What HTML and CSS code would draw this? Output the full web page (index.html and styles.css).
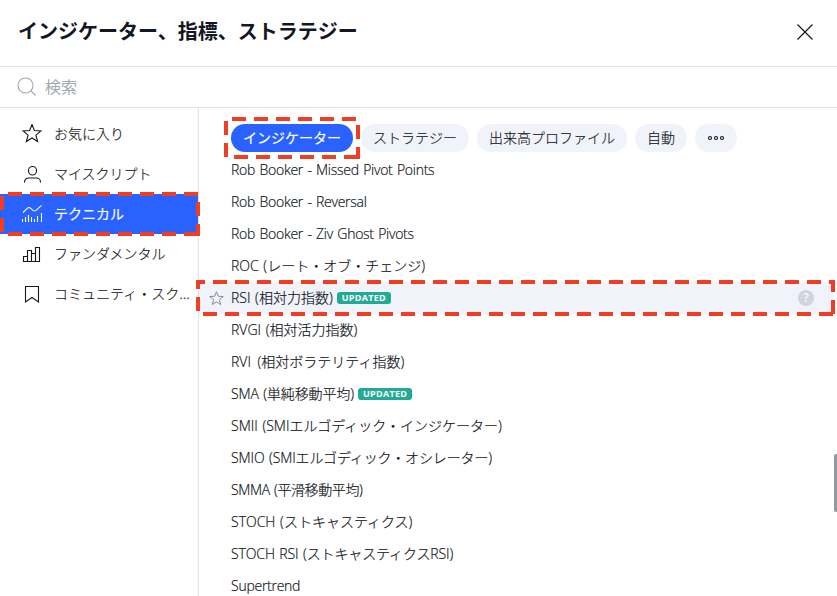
FILE: index.html
```html
<!DOCTYPE html>
<html lang="ja">

<head>
    <meta charset="utf-8">
    <title>インジケーター、指標、ストラテジー</title>
    <meta content="width=device-width,initial-scale=1" name="viewport">
    <link rel="stylesheet" href="styles.css">
</head>

<body>
    <div class="dialog">
        <header class="header">
            <h1>インジケーター、指標、ストラテジー</h1>
            <svg class="close" width="18" height="18" viewBox="0 0 18 18"><path d="M1.500 1.500l15 15m0-15l-15 15"/></svg>
        </header>
        <div class="search">
            <svg class="icon" width="20" height="20" viewBox="0 0 20 20"><circle cx="8.500" cy="8.500" r="7.500"/><path d="M14 14l4.500 4.500"/></svg>
            <span>検索</span>
        </div>
        <div class="main">
            <nav class="sidebar">
                <div class="tab">
                    <svg class="icon" width="20" height="20" viewBox="0 0 20 20"><path d="M10 .5l2.400 6 6.600.4-5.100 4.200 1.700 6.400-5.600-3.500-5.600 3.500 1.700-6.400L1 6.900l6.600-.4z"/></svg>
                    <span>お気に入り</span>
                </div>
                <div class="tab">
                    <svg class="icon" width="20" height="20" viewBox="0 0 20 20"><rect x="6.500" y="2.500" width="8" height="8.500" rx="4"/><path d="M2.500 18.500v-.5a4 4 0 0 1 4-4h8a4 4 0 0 1 4 4v.5"/></svg>
                    <span>マイスクリプト</span>
                </div>
                <div class="tab active">
                    <svg class="icon" width="20" height="20" viewBox="0 0 20 20"><path d="M1 8.500l4.500-4.300q1.500-1.300 3 0l2.500 2.200q1.500 1.200 3 0l5.500-5M.5 18v-3m3 3v-5m3 5v-7m3 7v-5m3 5v-3m3 3v-6m4 6V9"/></svg>
                    <span>テクニカル</span>
                </div>
                <div class="tab">
                    <svg class="icon" width="20" height="20" viewBox="0 0 20 20"><path d="M1.500 17.500v-5h4v5zM5.500 17.500v-11h4v11zM9.500 17.500v-8h4v8zM13.500 17.500v-14h4v14z"/></svg>
                    <span>ファンダメンタル</span>
                </div>
                <div class="tab">
                    <svg class="icon" width="20" height="20" viewBox="0 0 20 20"><path d="M3.500 2.500h13v15.500l-6.500-4.500-6.500 4.500z"/></svg>
                    <span>コミュニティ・スク...</span>
                </div>
            </nav>
            <div class="content">
                <div class="chips">
                    <div class="chip selected">インジケーター</div>
                    <div class="chip">ストラテジー</div>
                    <div class="chip">出来高プロファイル</div>
                    <div class="chip">自動</div>
                    <div class="chip more"><svg class="icon" width="18" height="6" viewBox="0 0 18 6"><circle cx="3" cy="3" r="1.500"/><circle cx="9" cy="3" r="1.500"/><circle cx="15" cy="3" r="1.500"/></svg></div>
                </div>
                <div class="list">
                    <div class="row"><span class="name latin">Rob Booker - Missed Pivot Points</span></div>
                    <div class="row"><span class="name latin">Rob Booker - Reversal</span></div>
                    <div class="row"><span class="name latin">Rob Booker - Ziv Ghost Pivots</span></div>
                    <div class="row"><span class="name">ROC (レート・オブ・チェンジ)</span></div>
                    <div class="row hovered">
                        <svg class="star" width="15" height="15" viewBox="0 0 20 20"><path d="M10 1l2.400 6 6.600.4-5.100 4.200 1.700 6.400-5.600-3.500L4.400 18l1.700-6.400L1 7.400 7.600 7z"/></svg>
                        <span class="name">RSI (相対力指数)</span><span class="badge">UPDATED</span>
                        <span class="help">?</span>
                    </div>
                    <div class="row"><span class="name">RVGI (相対活力指数)</span></div>
                    <div class="row"><span class="name loose">RVI (相対ボラテリティ指数)</span></div>
                    <div class="row"><span class="name tight">SMA (単純移動平均)</span><span class="badge">UPDATED</span></div>
                    <div class="row"><span class="name">SMII (SMIエルゴディック・インジケーター)</span></div>
                    <div class="row"><span class="name tight">SMIO (SMIエルゴディック・オシレーター)</span></div>
                    <div class="row"><span class="name tighter">SMMA (平滑移動平均)</span></div>
                    <div class="row"><span class="name">STOCH (ストキャスティクス)</span></div>
                    <div class="row"><span class="name tight">STOCH RSI (ストキャスティクスRSI)</span></div>
                    <div class="row"><span class="name latin">Supertrend</span></div>
                </div>
                <div class="scrollbar"></div>
            </div>
        </div>
    </div>

    <!-- dashed highlight frames -->
    <svg class="marks" width="837" height="596" viewBox="0 0 837 596">
        <path d="M8 194H200M8 234H198M2 196V236M198 202V236"/>
        <path d="M232 119H360M234 157H360M226 121V159M358 125V159"/>
        <path d="M213 282H835M203 314H835M198 297V311M196 282H205M198 280V289M833 280V292M833 300V316"/>
    </svg>
</body>

</html>
```
FILE: styles.css
```css
* {
    box-sizing: border-box;
}

body {
    margin: 0;
    background: #fff;
    color: #131722;
    font-family: "Open Sans", "Noto Sans CJK JP", sans-serif;
    font-size: 14px;
}

.dialog {
    display: flex;
    flex-direction: column;
    height: 596px;
    overflow: hidden;
}

.header {
    display: flex;
    align-items: center;
    justify-content: space-between;
    height: 67px;
    padding: 0 23px 4px 18px;
    border-bottom: 1px solid #e0e3eb;
}

h1 {
    margin: 0;
    font-family: "Noto Sans CJK JP", sans-serif;
    font-size: 20px;
    font-weight: 700;
    line-height: 28px;
}

.close {
    margin-top: 2px;
    fill: none;
    stroke: #131722;
    stroke-width: 1.2;
}

.icon {
    flex: none;
    fill: none;
    stroke: currentColor;
    stroke-width: 1.1;
}

.search {
    display: flex;
    align-items: center;
    gap: 8px;
    height: 41px;
    padding-left: 17px;
    border-bottom: 1px solid #e0e3eb;
    color: #a3a6af;
    font-size: 16px;
    line-height: 20px;
}

.search span {
    padding-bottom: 1px;
}

.main {
    display: flex;
    flex: 1;
    min-height: 0;
}

.sidebar {
    flex: none;
    width: 199px;
    padding-top: 6px;
    border-right: 1px solid #e0e3eb;
}

.tab {
    display: flex;
    align-items: center;
    gap: 12px;
    height: 40px;
    padding-left: 22px;
    font-family: "Noto Sans CJK JP", sans-serif;
    font-weight: 300;
    line-height: 20px;
    white-space: nowrap;
    -webkit-text-stroke: .15px;
}

.tab span {
    padding-bottom: 2px;
}

.tab.active {
    background: #2962ff;
    color: #fff;
    font-weight: 400;
}

.content {
    position: relative;
    flex: 1;
    padding-top: 16px;
    overflow: hidden;
}

.chips {
    display: flex;
    gap: 8px;
    padding-left: 32px;
}

.chip {
    height: 28px;
    padding: 0 12px;
    border-radius: 14px;
    background: #f0f3fa;
    font-weight: 300;
    line-height: 28px;
    white-space: nowrap;
    -webkit-text-stroke: .15px;
}

.chip.selected {
    background: #2962ff;
    color: #fff;
    font-weight: 400;
}

.chip.more {
    display: flex;
    align-items: center;
}

.list {
    margin-top: 2px;
}

.row {
    display: flex;
    align-items: center;
    height: 32px;
    padding: 0 19px 0 32px;
    font-weight: 300;
    line-height: 20px;
    white-space: nowrap;
}

.row.hovered {
    margin-right: 4px;
    padding: 0 19px 0 10px;
    background: #f0f3fa;
}

.name {
    word-spacing: 1px;
    -webkit-text-stroke: .2px;
}

.name.latin {
    letter-spacing: -.26px;
}

.name.loose {
    word-spacing: 3px;
}

.name.tight {
    letter-spacing: -.12px;
}

.name.tighter {
    letter-spacing: -.38px;
}

.star {
    margin-right: 7px;
    fill: none;
    stroke: #868993;
    stroke-width: 1.3;
}

.badge {
    height: 12px;
    margin-left: 4px;
    padding: 0 5px;
    border-radius: 3px;
    background: #22ab94;
    color: #fff;
    font-size: 9px;
    font-weight: 700;
    letter-spacing: .3px;
    line-height: 12px;
}

.help {
    width: 16px;
    height: 16px;
    margin-left: auto;
    border-radius: 50%;
    background: #d1d4dc;
    color: #f0f3fa;
    font-size: 12px;
    font-weight: 700;
    line-height: 16px;
    text-align: center;
}

.scrollbar {
    position: absolute;
    top: 346px;
    right: 0;
    width: 3px;
    height: 58px;
    border-radius: 2px 0 0 2px;
    background: #9598a1;
}

.marks {
    position: absolute;
    top: 0;
    left: 0;
    fill: none;
    stroke: #ef3e23;
    stroke-width: 4;
    stroke-dasharray: 14 8;
}
```
